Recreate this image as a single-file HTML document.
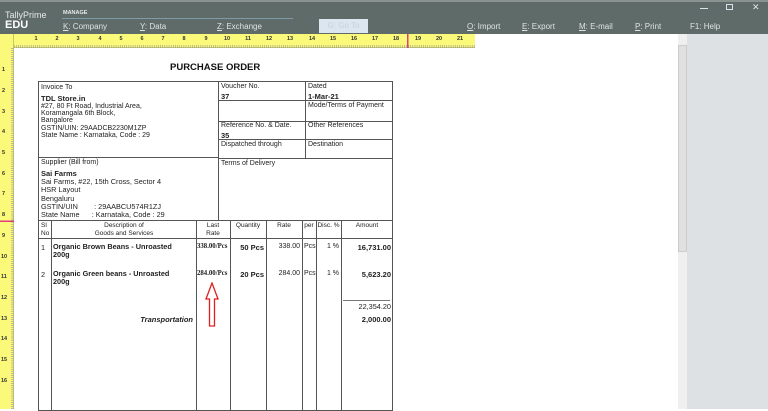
<!DOCTYPE html><html><head><style>
*{margin:0;padding:0;box-sizing:border-box}
body{width:768px;height:409px;overflow:hidden;background:#fff;font-family:"Liberation Sans",sans-serif;position:relative}
.a{position:absolute;white-space:nowrap}
.h{color:#dfe3e3;font-size:8px}
.t{font-size:7px;color:#222}
.b{font-weight:bold}
.v{position:absolute;background:#555;width:1px}
.hl{position:absolute;background:#555;height:1px}
</style></head><body>
<div class="a" style="left:0;top:0;width:768px;height:34px;background:#5f6b69;border-top:2px solid #8a9290"></div>
<div class="a" style="left:5px;top:10px;color:#e6e9e9;font-size:9px">TallyPrime</div>
<div class="a b" style="left:5px;top:19px;color:#fff;font-size:11px">EDU</div>
<div class="a b" style="left:63px;top:10px;color:#e6e9e9;font-size:5.5px">MANAGE</div>
<div class="a" style="left:62px;top:18px;width:231px;height:1px;background:#7f9aa8"></div>
<div class="a h" style="left:63px;top:22px"><u>K</u>: Company</div>
<div class="a h" style="left:140px;top:22px"><u>Y</u>: Data</div>
<div class="a h" style="left:217px;top:22px"><u>Z</u>: Exchange</div>
<div class="a" style="left:319px;top:19px;width:49px;height:14px;background:#dbe6f0;color:#c4d0da;font-size:8px;text-align:center;line-height:14px">G: Go To</div>
<div class="a h" style="left:467px;top:22px"><u>O</u>: Import</div>
<div class="a h" style="left:522px;top:22px"><u>E</u>: Export</div>
<div class="a h" style="left:579px;top:22px"><u>M</u>: E-mail</div>
<div class="a h" style="left:635px;top:22px"><u>P</u>: Print</div>
<div class="a h" style="left:690px;top:22px">F1: Help</div>
<div class="a" style="left:700px;top:8px;width:8px;height:1px;background:#dde"></div>
<div class="a" style="left:726px;top:4px;width:7px;height:6px;border:1px solid #dde"></div>
<div class="a h" style="left:752px;top:2px;font-size:9px">✕</div>
<div class="a" style="left:0;top:34px;width:475px;height:14px;background:#fbf97a;border-bottom:1px solid #c8c860"></div>
<div class="a" style="left:0;top:34px;width:14px;height:375px;background:#fbf97a;border-right:1px solid #c8c860"></div>
<svg class="a" style="left:0;top:34px" width="475" height="375">
<g font-family="Liberation Sans" font-size="5.5" font-weight="bold" fill="#333" text-anchor="middle">
<text x="36" y="6">1</text><text x="57" y="6">2</text><text x="78" y="6">3</text><text x="100" y="6">4</text><text x="121" y="6">5</text><text x="142" y="6">6</text><text x="163" y="6">7</text><text x="184" y="6">8</text><text x="206" y="6">9</text><text x="227" y="6">10</text><text x="248" y="6">11</text><text x="269" y="6">12</text><text x="290" y="6">13</text><text x="312" y="6">14</text><text x="333" y="6">15</text><text x="354" y="6">16</text><text x="375" y="6">17</text><text x="396" y="6">18</text><text x="418" y="6">19</text><text x="439" y="6">20</text><text x="460" y="6">21</text>
<g text-anchor="start"><text x="2" y="37">1</text><text x="2" y="58">2</text><text x="2" y="79">3</text><text x="2" y="99">4</text><text x="2" y="120">5</text><text x="2" y="141">6</text><text x="2" y="161">7</text><text x="2" y="182">8</text><text x="2" y="203">9</text><text x="1" y="224">10</text><text x="1" y="244">11</text><text x="1" y="265">12</text><text x="1" y="286">13</text><text x="1" y="306">14</text><text x="1" y="327">15</text><text x="1" y="348">16</text></g>
</g>
<path d="M14 12.5H475" stroke="#999" stroke-width="3" stroke-dasharray="0.6 1.52"/>
<path d="M12.5 14V375" stroke="#999" stroke-width="3" stroke-dasharray="0.6 1.47"/>
<rect x="407" y="0" width="1.5" height="14" fill="#e0407a"/>
<rect x="0" y="186.5" width="14" height="1.5" fill="#e0407a"/>
</svg>
<div class="a" style="left:678px;top:34px;width:9px;height:375px;background:#efefef"></div>
<div class="a" style="left:678px;top:45px;width:9px;height:207px;background:#e0e0e0;border:1px solid #ccc"></div>
<div class="a" style="left:687px;top:34px;width:81px;height:375px;background:#dde1e4"></div>
<div class="a b" style="left:170px;top:62px;font-size:9.5px;color:#111">PURCHASE ORDER</div>
<div class="a" style="left:38px;top:81px;width:355px;height:330px;border:1px solid #555"></div>
<div class="v" style="left:218px;top:81px;height:139px"></div>
<div class="v" style="left:305px;top:81px;height:77px"></div>
<div class="hl" style="left:38px;top:157px;width:181px"></div>
<div class="hl" style="left:218px;top:100px;width:175px"></div>
<div class="hl" style="left:218px;top:121px;width:175px"></div>
<div class="hl" style="left:218px;top:139px;width:175px"></div>
<div class="hl" style="left:218px;top:158px;width:175px"></div>
<div class="hl" style="left:38px;top:220px;width:355px"></div>
<div class="hl" style="left:38px;top:238px;width:355px"></div>
<div class="v" style="left:51px;top:220px;height:190px"></div>
<div class="v" style="left:196px;top:220px;height:190px"></div>
<div class="v" style="left:230px;top:220px;height:190px"></div>
<div class="v" style="left:266px;top:220px;height:190px"></div>
<div class="v" style="left:302px;top:220px;height:190px"></div>
<div class="v" style="left:316px;top:220px;height:190px"></div>
<div class="v" style="left:341px;top:220px;height:190px"></div>
<div class="a t" style="left:41px;top:84px">Invoice To</div>
<div class="a t b" style="left:41px;top:94px;font-size:7.5px">TDL Store.in</div>
<div class="a t" style="left:41px;top:103px;line-height:7.2px;font-size:7px">#27, 80 Ft Road, Industrial Area,<br>Koramangala 6th Block,<br>Bangalore<br>GSTIN/UIN: 29AADCB2230M1ZP<br>State Name :  Karnataka, Code : 29</div>
<div class="a t" style="left:41px;top:159px">Supplier (Bill from)</div>
<div class="a t b" style="left:41px;top:169px;font-size:7.5px">Sai Farms</div>
<div class="a t" style="left:41px;top:178px;line-height:8.3px;font-size:7.3px">Sai Farms, #22, 15th Cross, Sector 4<br>HSR Layout<br>Bengaluru<br>GSTIN/UIN&nbsp;&nbsp;&nbsp;&nbsp;&nbsp;&nbsp;&nbsp;&nbsp;: 29AABCU574R1ZJ<br>State Name&nbsp;&nbsp;&nbsp;&nbsp;&nbsp;&nbsp;: Karnataka, Code : 29</div>
<div class="a t" style="left:221px;top:83px">Voucher No.</div>
<div class="a t b" style="left:221px;top:92px;font-size:7.5px">37</div>
<div class="a t" style="left:308px;top:83px">Dated</div>
<div class="a t b" style="left:308px;top:92px;font-size:7.5px">1-Mar-21</div>
<div class="a t" style="left:308px;top:102px">Mode/Terms of Payment</div>
<div class="a t" style="left:221px;top:122px">Reference No. &amp; Date.</div>
<div class="a t b" style="left:221px;top:131px;font-size:7.5px">35</div>
<div class="a t" style="left:308px;top:122px">Other References</div>
<div class="a t" style="left:221px;top:141px">Dispatched through</div>
<div class="a t" style="left:308px;top:141px">Destination</div>
<div class="a t" style="left:221px;top:160px">Terms of Delivery</div>
<div class="a t" style="left:41px;top:222px;line-height:8px;font-size:6.5px">Sl<br>No</div>
<div class="a t" style="left:52px;top:222px;width:144px;text-align:center;line-height:8px;font-size:6.5px">Description of<br>Goods and Services</div>
<div class="a t" style="left:196px;top:222px;width:34px;text-align:center;line-height:8px;font-size:6.5px">Last<br>Rate</div>
<div class="a t" style="left:230px;top:222px;width:36px;text-align:center;font-size:6.5px">Quantity</div>
<div class="a t" style="left:266px;top:222px;width:36px;text-align:center;font-size:6.5px">Rate</div>
<div class="a t" style="left:302px;top:222px;width:14px;text-align:center;font-size:6.5px">per</div>
<div class="a t" style="left:316px;top:222px;width:25px;text-align:center;font-size:6.5px">Disc. %</div>
<div class="a t" style="left:341px;top:222px;width:52px;text-align:center;font-size:6.5px">Amount</div>
<div class="a t" style="left:41px;top:243px;font-size:7.3px">1</div>
<div class="a t b" style="left:53px;top:243px;line-height:8px;font-size:7.3px">Organic Brown Beans - Unroasted<br>200g</div>
<div class="a t b" style="left:197px;top:243px;font-family:'Liberation Serif',serif;font-size:6.8px">338.00/Pcs</div>
<div class="a t b" style="left:230px;top:243px;width:34px;text-align:right;font-size:7.5px">50 Pcs</div>
<div class="a t" style="left:266px;top:243px;width:34px;text-align:right">338.00</div>
<div class="a t" style="left:304px;top:243px">Pcs</div>
<div class="a t" style="left:316px;top:243px;width:23px;text-align:right">1 %</div>
<div class="a t b" style="left:341px;top:243px;width:50px;text-align:right;font-size:7.5px">16,731.00</div>
<div class="a t" style="left:41px;top:270px;font-size:7.3px">2</div>
<div class="a t b" style="left:53px;top:270px;line-height:8px;font-size:7.3px">Organic Green beans - Unroasted<br>200g</div>
<div class="a t b" style="left:197px;top:270px;font-family:'Liberation Serif',serif;font-size:6.8px">284.00/Pcs</div>
<div class="a t b" style="left:230px;top:270px;width:34px;text-align:right;font-size:7.5px">20 Pcs</div>
<div class="a t" style="left:266px;top:270px;width:34px;text-align:right">284.00</div>
<div class="a t" style="left:304px;top:270px">Pcs</div>
<div class="a t" style="left:316px;top:270px;width:23px;text-align:right">1 %</div>
<div class="a t b" style="left:341px;top:270px;width:50px;text-align:right;font-size:7.5px">5,623.20</div>
<div class="hl" style="left:343px;top:300px;width:47px;background:#777"></div>
<div class="a t" style="left:341px;top:302px;width:50px;text-align:right;font-size:7.3px">22,354.20</div>
<div class="a t b" style="left:52px;top:315px;width:141px;text-align:right;font-style:italic;font-size:7.5px">Transportation</div>
<div class="a t b" style="left:341px;top:315px;width:50px;text-align:right;font-size:7.5px">2,000.00</div>
<svg class="a" style="left:204px;top:282px" width="16" height="46"><path d="M8 1L14 17H10.5V44H5.5V17H2Z" fill="none" stroke="#e02020" stroke-width="1.3"/></svg>
</body></html>
